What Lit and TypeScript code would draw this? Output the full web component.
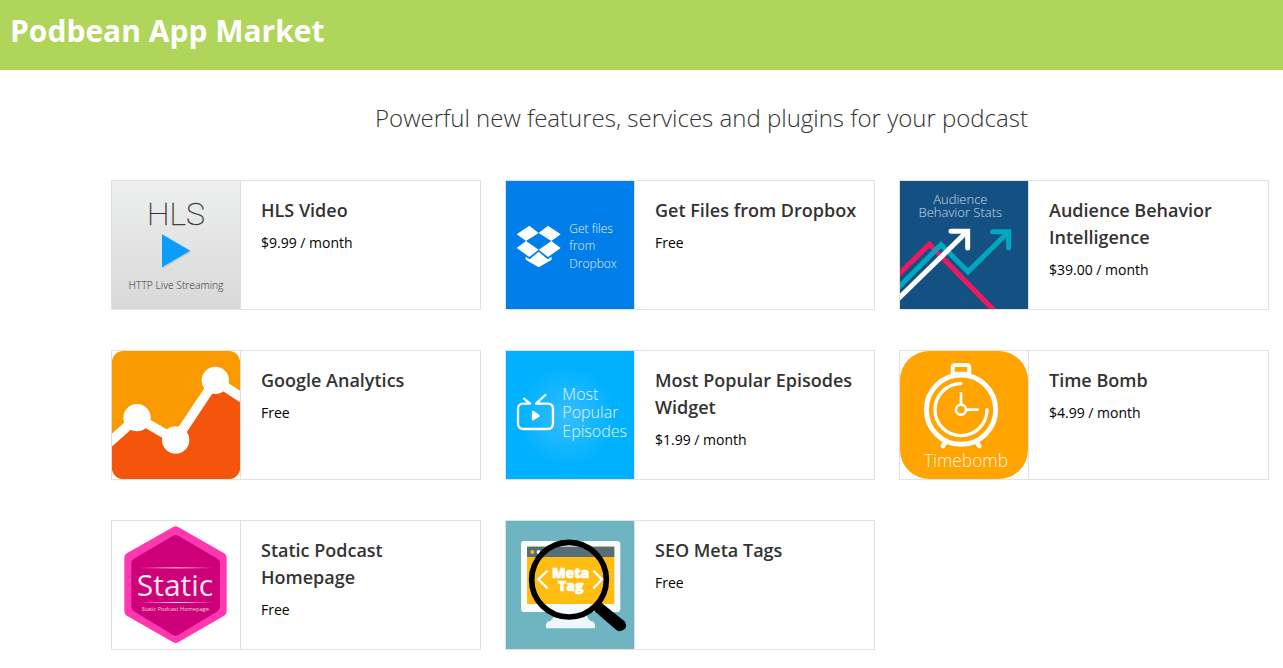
import { LitElement, html, css, TemplateResult } from "lit";
import { customElement, property } from "lit/decorators.js";

const hls = html`<svg class="art" viewBox="21 18 384 384" aria-hidden="true">
  <defs>
    <linearGradient id="grey" x1="0" y1="0" x2="0" y2="1">
      <stop offset="0" stop-color="#eeefef" />
      <stop offset="1" stop-color="#d8d8d8" />
    </linearGradient>
  </defs>
  <rect x="21" y="18" width="384" height="384" fill="url(#grey)" />
  <text class="thin" x="213" y="149" font-size="96" text-anchor="middle" fill="#333" stroke="#333">HLS</text>
  <path d="M172 183L257 232L172 281Z" fill="#bbb" opacity=".6" />
  <path d="M171 178L256 227L171 277Z" fill="#0a9dff" />
  <text class="light" x="213" y="341" font-size="31" text-anchor="middle" fill="#333">HTTP Live Streaming</text>
</svg>`;

const dropbox = html`<svg class="art" viewBox="18 18 384 384" aria-hidden="true">
  <rect x="18" y="18" width="384" height="384" fill="#007ee9" />
  <path
    fill="#fff"
    d="M50 178L88 152L116 174L78 198ZM182 178L144 152L116 174L154 198ZM78 198L116 224L88 246L50 219ZM154 198L116 224L144 246L182 219ZM116 230L89 253L77 245V254L116 277L155 254V245L143 253Z"
  />
  <g class="light" font-size="36" fill="#e2f0fd">
    <text x="208" y="175">Get files</text>
    <text x="208" y="226">from</text>
    <text x="208" y="278">Dropbox</text>
  </g>
</svg>`;

const audience = html`<svg class="art" viewBox="18 18 384 384" aria-hidden="true">
  <rect x="18" y="18" width="384" height="384" fill="#155083" />
  <g class="light" font-size="39" text-anchor="middle" fill="#c9d8e4">
    <text x="199" y="86">Audience</text>
    <text x="199" y="125">Behavior Stats</text>
  </g>
  <g fill="none" stroke-width="15">
    <path d="M6 306L106 208L306 412" stroke="#f0185f" />
    <path d="M6 345L141 209L222 290L343 171" stroke="#00a9bf" />
    <path d="M296 170H344V218" stroke="#00a9bf" stroke-linecap="round" />
    <path d="M6 378L220 169" stroke="#fff" />
    <path d="M171 169H221V219" stroke="#fff" stroke-linecap="round" />
  </g>
</svg>`;

const analytics = html`<svg class="art" viewBox="21 18 384 384" aria-hidden="true">
  <defs>
    <clipPath id="tile"><rect x="21" y="18" width="384" height="384" rx="34" /></clipPath>
  </defs>
  <g clip-path="url(#tile)">
    <rect x="21" y="18" width="384" height="384" fill="#f99b00" />
    <path d="M11 294L96 218L212 285L331 106L415 161V412H11Z" fill="#f5540b" />
    <path d="M11 294L96 218L212 285L331 106L415 161" fill="none" stroke="#fff" stroke-width="29" />
    <g fill="#fff">
      <circle cx="96" cy="218" r="41" />
      <circle cx="212" cy="285" r="41" />
      <circle cx="331" cy="106" r="41" />
    </g>
  </g>
</svg>`;

const popular = html`<svg class="art" viewBox="18 18 384 384" aria-hidden="true">
  <defs>
    <radialGradient id="glow" gradientUnits="userSpaceOnUse" cx="200" cy="215" r="150">
      <stop offset="0" stop-color="#38bdff" />
      <stop offset="1" stop-color="#00b1ff" />
    </radialGradient>
  </defs>
  <rect x="18" y="18" width="384" height="384" fill="url(#glow)" />
  <g fill="none" stroke="#fff" stroke-width="7" stroke-linecap="round" stroke-linejoin="round">
    <path d="M72 161L90 176H70Q54 176 54 192V235Q54 252 70 252H143Q159 252 159 235V192Q159 176 143 176H108L136 150" />
    <path d="M99 201L116 212L99 223Z" fill="#fff" />
  </g>
  <g class="light" font-size="48" fill="#e2f5ff">
    <text x="187" y="164">Most</text>
    <text x="187" y="219">Popular</text>
    <text x="187" y="276">Episodes</text>
  </g>
</svg>`;

const timebomb = html`<svg class="art" viewBox="18 18 384 384" aria-hidden="true">
  <rect x="18" y="18" width="384" height="384" rx="88" fill="#ffa400" />
  <g fill="none" stroke="#fff" stroke-linecap="round">
    <path d="M176 84V68Q176 60 184 60H218Q226 60 226 68V84" stroke-width="12" />
    <path d="M176 83H226" stroke-width="6" />
    <circle cx="201" cy="194" r="104" stroke-width="15" />
    <path d="M201 116A78 78 0 1 0 279 194" stroke-width="10" />
    <circle cx="201" cy="194" r="15" stroke-width="8" />
    <path d="M201 145V178M217 194H251" stroke-width="8" />
    <path d="M154 292L147 303M248 292L256 303" stroke-width="14" />
  </g>
  <text class="light" x="216" y="365" font-size="52" text-anchor="middle" fill="#fff6e6">Timebomb</text>
</svg>`;

const staticPage = html`<svg class="art" viewBox="21 18 384 384" aria-hidden="true">
  <defs>
    <linearGradient id="rule">
      <stop offset="0" stop-color="#fff" stop-opacity="0" />
      <stop offset=".5" stop-color="#fff" stop-opacity=".9" />
      <stop offset="1" stop-color="#fff" stop-opacity="0" />
    </linearGradient>
  </defs>
  <g stroke-width="30" stroke-linejoin="round">
    <path d="M212 49L350 128V289L212 369L73 289V128Z" fill="#ff37b1" stroke="#ff37b1" />
    <path d="M212 75L330 144V276L212 347L94 276V144Z" fill="#ce0079" stroke="#ce0079" />
  </g>
  <rect x="102" y="157" width="224" height="3" fill="url(#rule)" />
  <rect x="102" y="261" width="224" height="3" fill="url(#rule)" />
  <text class="book" x="210" y="242" font-size="90" text-anchor="middle" fill="#f0e8ec">Static</text>
  <text class="book" x="211" y="287" font-size="17" text-anchor="middle" fill="#f0d0e2">Static Podcast Homepage</text>
</svg>`;

const seo = html`<svg class="art" viewBox="18 18 384 384" aria-hidden="true">
  <rect x="18" y="18" width="384" height="384" fill="#6fb5c1" />
  <path d="M164 288H258Q260 318 280 320Q286 324 285 340H138Q137 324 143 320Q162 318 164 288Z" fill="#eef8fb" />
  <rect x="63" y="78" width="298" height="213" rx="10" fill="#f8fcfd" />
  <rect x="81" y="95" width="262" height="172" fill="#ffbd12" />
  <rect x="81" y="95" width="262" height="31" fill="#566e78" />
  <circle cx="97" cy="111" r="6" fill="#ffb516" />
  <circle cx="116" cy="111" r="6" fill="#fff" />
  <circle cx="207" cy="194" r="112" fill="none" stroke="#000" stroke-width="17" />
  <path d="M280 270L290 280" stroke="#000" stroke-width="22" />
  <path d="M301 261L372 317Q382 328 376 340Q364 354 350 346L283 288Z" fill="#000" />
  <path d="M143 167L115 193L143 220M280 167L306 193L280 220" fill="none" stroke="#fff" stroke-width="7" />
  <g class="heavy" font-size="42" text-anchor="middle" fill="#fff" stroke="#fff" stroke-width="2">
    <text x="212" y="189">Meta</text>
    <text x="212" y="228">Tag</text>
  </g>
</svg>`;

interface MarketApp {
  name: string;
  price: string;
  art: TemplateResult;
}

const apps: MarketApp[] = [
  { name: "HLS Video", price: "$9.99 / month", art: hls },
  { name: "Get Files from Dropbox", price: "Free", art: dropbox },
  { name: "Audience Behavior Intelligence", price: "$39.00 / month", art: audience },
  { name: "Google Analytics", price: "Free", art: analytics },
  { name: "Most Popular Episodes Widget", price: "$1.99 / month", art: popular },
  { name: "Time Bomb", price: "$4.99 / month", art: timebomb },
  { name: "Static Podcast Homepage", price: "Free", art: staticPage },
  { name: "SEO Meta Tags", price: "Free", art: seo },
];

@customElement("app-card")
export class AppCard extends LitElement {
  @property({ attribute: false }) app!: MarketApp;

  static styles = css`
    :host {
      display: block;
    }
    .card {
      display: flex;
      height: 100%;
      box-sizing: border-box;
      border: 1px solid #e1e1e1;
      color: #000;
      text-decoration: none;
    }
    .thumb {
      flex: none;
      border-right: 1px solid #e1e1e1;
    }
    .art {
      display: block;
      width: 128px;
      height: 128px;
    }
    .info {
      flex: 1;
      min-width: 0;
      padding: 16px 16px 16px 20px;
    }
    .name {
      margin: 0 0 8px;
      font-size: 18px;
      line-height: 27px;
      font-weight: 600;
      color: #333;
    }
    .price {
      margin: 0;
      font-size: 14px;
      line-height: 21px;
    }
    .thin {
      font-family: "Roboto", sans-serif;
      font-weight: 100;
    }
    .light {
      font-weight: 300;
    }
    .book {
      font-weight: 400;
    }
    .heavy {
      font-weight: 800;
    }
  `;

  render() {
    return html`<a class="card" href="#">
      <div class="thumb">${this.app.art}</div>
      <div class="info">
        <h3 class="name">${this.app.name}</h3>
        <p class="price">${this.app.price}</p>
      </div>
    </a>`;
  }
}

@customElement("app-root")
export class AppRoot extends LitElement {
  static styles = css`
    :host {
      display: block;
      background: #fff;
      font-family: "Open Sans", "Noto Sans", sans-serif;
    }
    .bar {
      padding: 8px 10px 17px;
      background: #b0d55b;
    }
    .title {
      margin: 0;
      font-size: 30px;
      line-height: 45px;
      font-weight: 700;
      color: #fff;
    }
    .tagline {
      margin: 30px 0 44px 120px;
      font-size: 24px;
      line-height: 36px;
      font-weight: 300;
      text-align: center;
      color: #333;
    }
    .grid {
      display: grid;
      grid-template-columns: repeat(auto-fill, minmax(320px, 1fr));
      gap: 40px 24px;
      padding: 0 14px 18px 111px;
    }
  `;

  render() {
    return html`
      <header class="bar"><h1 class="title">Podbean App Market</h1></header>
      <main>
        <h2 class="tagline">Powerful new features, services and plugins for your podcast</h2>
        <div class="grid">${apps.map((app) => html`<app-card .app=${app}></app-card>`)}</div>
      </main>
    `;
  }
}
